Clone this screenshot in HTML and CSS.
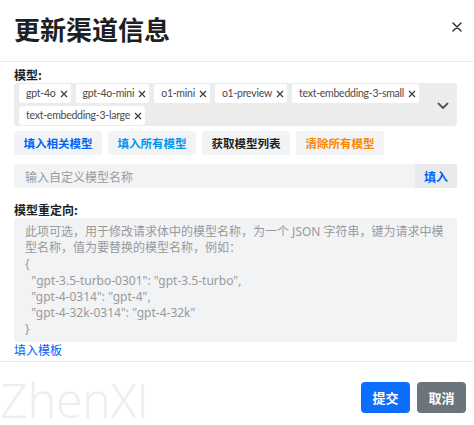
FILE: index.html
```html
<!DOCTYPE html>
<html lang="zh-CN">
<head>
    <meta charset="UTF-8">
    <meta name="viewport" content="width=device-width, initial-scale=1.0">
    <title>更新渠道信息</title>
    <link rel="stylesheet" href="styles.css">
</head>
<body>
    <div class="modal">
        <!-- Header -->
        <div class="modal-header">
            <div class="modal-title">更新渠道信息</div>
            <span class="close-btn">
                <svg width="10" height="10" viewBox="0 0 10 10"><path d="M1 1L9 9M9 1L1 9" stroke="#333" stroke-width="1.5" stroke-linecap="round"/></svg>
            </span>
        </div>

        <!-- Body -->
        <div class="modal-body">
            <div class="field-label">模型:</div>
            <div class="tag-select">
                <div class="tag-list">
                    <span class="tag">gpt-4o<svg viewBox="0 0 8 8"><path d="M1 1L7 7M7 1L1 7"/></svg></span>
                    <span class="tag">gpt-4o-mini<svg viewBox="0 0 8 8"><path d="M1 1L7 7M7 1L1 7"/></svg></span>
                    <span class="tag">o1-mini<svg viewBox="0 0 8 8"><path d="M1 1L7 7M7 1L1 7"/></svg></span>
                    <span class="tag">o1-preview<svg viewBox="0 0 8 8"><path d="M1 1L7 7M7 1L1 7"/></svg></span>
                    <span class="tag">text-embedding-3-small<svg viewBox="0 0 8 8"><path d="M1 1L7 7M7 1L1 7"/></svg></span>
                    <span class="tag">text-embedding-3-large<svg viewBox="0 0 8 8"><path d="M1 1L7 7M7 1L1 7"/></svg></span>
                </div>
                <span class="chevron">
                    <svg width="12" height="8" viewBox="0 0 12 8"><path d="M1.5 1.5L6 6L10.5 1.5" fill="none" stroke="#555" stroke-width="1.8" stroke-linecap="round" stroke-linejoin="round"/></svg>
                </span>
            </div>

            <div class="action-row">
                <button class="light-btn primary">填入相关模型</button>
                <button class="light-btn secondary">填入所有模型</button>
                <button class="light-btn tertiary">获取模型列表</button>
                <button class="light-btn warning">清除所有模型</button>
            </div>

            <div class="input-group">
                <input type="text" placeholder="输入自定义模型名称">
                <button class="fill-btn">填入</button>
            </div>

            <div class="field-label mapping-label">模型重定向:</div>
            <div class="mapping-box">此项可选，用于修改请求体中的模型名称，为一个 JSON 字符串，键为请求中模型名称，值为要替换的模型名称，例如：
{
  "gpt-3.5-turbo-0301": "gpt-3.5-turbo",
  "gpt-4-0314": "gpt-4",
  "gpt-4-32k-0314": "gpt-4-32k"
}</div>
            <a class="template-link">填入模板</a>
        </div>

        <!-- Footer -->
        <div class="modal-footer">
            <div class="watermark">ZhenXI</div>
            <button class="btn btn-primary">提交</button>
            <button class="btn btn-secondary">取消</button>
        </div>
    </div>
</body>
</html>
```

FILE: styles.css
```css
body {
    margin: 0;
    padding: 0;
    background: #fff;
    font-family: "Noto Sans", "Noto Sans CJK SC", sans-serif;
    color: #1c1f23;
    overflow: hidden;
}

.modal {
    width: 474px;
    height: 425px;
    display: flex;
    flex-direction: column;
}

/* Header */
.modal-header {
    height: 61px;
    border-bottom: 1px solid #ececec;
    display: flex;
    justify-content: space-between;
    align-items: flex-start;
    padding: 0 14px;
}

.modal-title {
    font-size: 26px;
    font-weight: bold;
    line-height: 30px;
    margin-top: 14px;
    font-family: "Noto Sans CJK SC", sans-serif;
}

.close-btn {
    margin-top: 15px;
    margin-right: -2px;
}

/* Body */
.modal-body {
    padding: 0 17px 0 14px;
    display: flex;
    flex-direction: column;
}

.field-label {
    font-size: 12px;
    font-weight: bold;
    line-height: 16px;
    margin-top: 5px;
    font-family: "Noto Sans CJK SC", sans-serif;
}

.tag-select {
    background: #ececec;
    border-radius: 3px;
    display: flex;
    align-items: center;
    padding: 1px 0 1px 5px;
    min-height: 41px;
}

.tag-list {
    flex: 1;
    display: flex;
    flex-wrap: wrap;
    gap: 3px 5px;
}

.tag {
    background: #fff;
    border-radius: 3px;
    height: 19px;
    line-height: 19px;
    padding: 0 3px 0 7px;
    font-family: "Lato", sans-serif;
    font-size: 10.5px;
    letter-spacing: -0.25px;
    color: #4a4a4a;
    white-space: nowrap;
    display: flex;
    align-items: center;
}

.tag svg {
    width: 8px;
    height: 8px;
    margin-left: 4px;
    stroke: #3a3a3a;
    stroke-width: 1.2;
    fill: none;
}

.chevron {
    width: 28px;
    display: flex;
    justify-content: center;
    padding-top: 2px;
}

.action-row {
    display: flex;
    gap: 6px;
    margin-top: 5px;
}

.light-btn {
    width: 88px;
    height: 24px;
    border: none;
    border-radius: 3px;
    background: #f2f3f4;
    font-size: 11.5px;
    font-weight: bold;
    font-family: "Noto Sans CJK SC", sans-serif;
    padding: 0;
    cursor: pointer;
}

.primary { color: #0064fa; }
.secondary { color: #0095ee; }
.tertiary { color: #1c1f23; }
.warning { color: #fc8800; }

.input-group {
    display: flex;
    margin-top: 9px;
    height: 24px;
    background: #f2f3f4;
    border-radius: 3px;
}

.input-group input {
    flex: 1;
    border: none;
    background: transparent;
    padding: 0 11px;
    font-size: 12px;
    font-family: "Noto Sans CJK SC", sans-serif;
    outline: none;
}

.input-group input::placeholder {
    color: #9a9b9d;
}

.fill-btn {
    width: 42px;
    border: none;
    border-radius: 0 3px 3px 0;
    background: #e9eaeb;
    color: #0064fa;
    font-weight: bold;
    font-size: 12px;
    font-family: "Noto Sans CJK SC", sans-serif;
    padding: 0;
}

.mapping-label {
    margin-top: 14px;
}

.mapping-box {
    background: #f2f3f4;
    border-radius: 3px;
    padding: 6px 6px 6px 11px;
    height: 112px;
    font-size: 12px;
    line-height: 16.2px;
    color: #999a9c;
    white-space: pre-wrap;
    font-family: "Noto Sans", "Noto Sans CJK SC", sans-serif;
}

.template-link {
    font-size: 12px;
    line-height: 16px;
    color: #0064fa;
    font-family: "Noto Sans CJK SC", sans-serif;
}

/* Footer */
.modal-footer {
    position: relative;
    border-top: 1px solid #ececec;
    margin-top: 3px;
    flex: 1;
    display: flex;
    justify-content: flex-end;
    align-items: flex-start;
    gap: 7px;
    padding: 20px 8px 0 0;
}

.watermark {
    position: absolute;
    left: 0;
    top: 14px;
    font-family: "Open Sans", sans-serif;
    font-weight: 300;
    font-size: 48px;
    line-height: 48px;
    color: #ededed;
}

.btn {
    width: 49px;
    height: 31px;
    border: none;
    border-radius: 4px;
    color: #fff;
    font-size: 13px;
    font-weight: bold;
    font-family: "Noto Sans CJK SC", sans-serif;
    padding: 0;
    position: relative;
}

.btn-primary { background: #0d6efd; }
.btn-secondary { background: #6c757d; }
```
